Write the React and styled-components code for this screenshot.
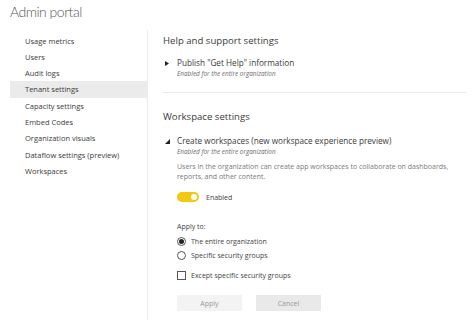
import React from 'react';
import styled, { createGlobalStyle } from 'styled-components';

const GlobalStyle = createGlobalStyle`
  html, body {
    margin: 0;
    padding: 0;
    background: #fff;
  }
  body {
    font-family: "Open Sans", "Noto Sans", Arial, sans-serif;
    color: #444;
    width: 474px;
    height: 320px;
    overflow: hidden;
  }
`;

const Page = styled.div`
  display: flex;
  flex-direction: column;
  height: 320px;
`;

const Title = styled.h1`
  margin: 0;
  padding: 3px 0 0 10px;
  height: 30px;
  box-sizing: border-box;
  font-family: Lato, "Open Sans", sans-serif;
  font-size: 14px;
  font-weight: 300;
  letter-spacing: -0.5px;
  color: #555;
`;

const Body = styled.div`
  display: flex;
  flex: 1;
`;

const Sidebar = styled.nav`
  flex: 0 0 137px;
  margin-left: 10px;
  padding-top: 2.5px;
  border-right: 1px solid #ececec;
  display: flex;
  flex-direction: column;
`;

const NavItem = styled.div`
  height: 16.3px;
  line-height: 16.3px;
  padding-left: 15px;
  font-size: 7.5px;
  color: #3a3a3a;
  background: ${p => (p.$active ? '#ebebeb' : 'transparent')};
`;

const Main = styled.main`
  flex: 1;
  min-width: 0;
  padding: 4px 8px 0 15px;
  display: flex;
  flex-direction: column;
`;

const Heading = styled.h2`
  margin: ${p => p.$top || 0}px 0 0 0;
  font-size: 9.6px;
  line-height: 14px;
  font-weight: 400;
  color: #3a3a3a;
`;

const Setting = styled.div`
  display: flex;
  margin-top: ${p => p.$top}px;
`;

const Caret = styled.div`
  width: 14px;
  padding-top: 4px;
  padding-left: 2px;
  box-sizing: border-box;
  display: flex;
  justify-content: flex-start;
`;

const SettingBody = styled.div`
  display: flex;
  flex-direction: column;
`;

const SettingTitle = styled.div`
  font-size: 8.2px;
  line-height: 12px;
  color: #3a3a3a;
`;

const Note = styled.div`
  font-size: 6.4px;
  line-height: 10px;
  font-style: italic;
  color: #6a6a6a;
`;

const Divider = styled.hr`
  margin: 13px 0 0 0;
  border: 0;
  border-top: 1px solid #ebebeb;
  width: 303px;
`;

const Description = styled.p`
  margin: 5px 0 0 0;
  font-size: 7px;
  line-height: 9.5px;
  color: #7a7a7a;
  width: 292px;
`;

const ToggleRow = styled.div`
  display: flex;
  align-items: center;
  gap: 7px;
  margin-top: 11px;
  font-size: 7px;
  color: #444;
`;

const Toggle = styled.div`
  width: 22px;
  height: 10px;
  border-radius: 5px;
  background: #f2c811;
  position: relative;

  &::after {
    content: '';
    position: absolute;
    right: 2px;
    top: 2px;
    width: 6px;
    height: 6px;
    border-radius: 50%;
    background: #fff;
  }
`;

const Label = styled.div`
  margin-top: ${p => p.$top}px;
  font-size: 7px;
  line-height: 10px;
  color: #444;
`;

const OptionRow = styled.label`
  display: flex;
  align-items: center;
  gap: 5px;
  height: 10px;
  margin-top: ${p => p.$top}px;
  font-size: 7px;
  color: #444;
`;

const Radio = styled.span`
  width: 9px;
  height: 9px;
  box-sizing: border-box;
  border: 1px solid #555;
  border-radius: 50%;
  display: flex;
  align-items: center;
  justify-content: center;

  &::after {
    content: '';
    width: 5px;
    height: 5px;
    border-radius: 50%;
    background: ${p => (p.$checked ? '#222' : 'transparent')};
  }
`;

const Checkbox = styled.span`
  width: 9px;
  height: 9px;
  box-sizing: border-box;
  border: 1px solid #555;
`;

const Buttons = styled.div`
  display: flex;
  gap: 14px;
  margin-top: 15px;
`;

const Button = styled.button`
  width: 65px;
  height: 16px;
  border: 0;
  padding: 0;
  font-family: inherit;
  font-size: 7px;
  color: #999;
  background: ${p => (p.$muted ? '#f3f3f3' : '#e9e9e9')};
`;

const IndentBlock = styled.div`
  padding-left: 14px;
  display: flex;
  flex-direction: column;
`;

const navItems = [
  'Usage metrics',
  'Users',
  'Audit logs',
  'Tenant settings',
  'Capacity settings',
  'Embed Codes',
  'Organization visuals',
  'Dataflow settings (preview)',
  'Workspaces',
];

function RightCaret() {
  return (
    <svg width="4" height="5" viewBox="0 0 4 5">
      <path d="M0 0 L4 2.5 L0 5 Z" fill="#222" />
    </svg>
  );
}

function DownCaret() {
  return (
    <svg width="5" height="5" viewBox="0 0 5 5">
      <path d="M5 0 L5 5 L0 5 Z" fill="#222" />
    </svg>
  );
}

export default function App() {
  return (
    <>
      <GlobalStyle />
      <Page>
        <Title>Admin portal</Title>
        <Body>
          <Sidebar>
            {navItems.map(item => (
              <NavItem key={item} $active={item === 'Tenant settings'}>
                {item}
              </NavItem>
            ))}
          </Sidebar>
          <Main>
            <Heading>Help and support settings</Heading>
            <Setting $top={9}>
              <Caret><RightCaret /></Caret>
              <SettingBody>
                <SettingTitle>Publish "Get Help" information</SettingTitle>
                <Note>Enabled for the entire organization</Note>
              </SettingBody>
            </Setting>
            <Divider />
            <Heading $top={17}>Workspace settings</Heading>
            <Setting $top={11}>
              <Caret><DownCaret /></Caret>
              <SettingBody>
                <SettingTitle>Create workspaces (new workspace experience preview)</SettingTitle>
                <Note>Enabled for the entire organization</Note>
              </SettingBody>
            </Setting>
            <IndentBlock>
              <Description>
                Users in the organization can create app workspaces to collaborate on dashboards,
                reports, and other content.
              </Description>
              <ToggleRow>
                <Toggle />
                Enabled
              </ToggleRow>
              <Label $top={20}>Apply to:</Label>
              <OptionRow $top={4}>
                <Radio $checked />
                The entire organization
              </OptionRow>
              <OptionRow $top={4}>
                <Radio />
                Specific security groups
              </OptionRow>
              <OptionRow $top={10}>
                <Checkbox />
                Except specific security groups
              </OptionRow>
              <Buttons>
                <Button $muted>Apply</Button>
                <Button>Cancel</Button>
              </Buttons>
            </IndentBlock>
          </Main>
        </Body>
      </Page>
    </>
  );
}
